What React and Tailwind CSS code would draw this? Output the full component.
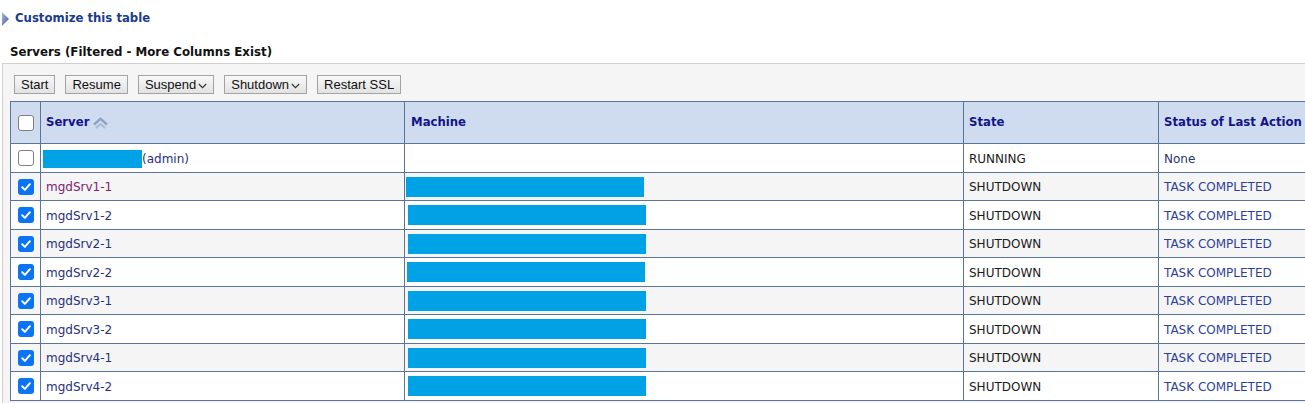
import React from "react";

const rows = [
  { name: null, state: "RUNNING", status: "None", checked: false, visited: false },
  { name: "mgdSrv1-1", state: "SHUTDOWN", status: "TASK COMPLETED", checked: true, visited: true, mx: "ml-[1px] w-[238px]" },
  { name: "mgdSrv1-2", state: "SHUTDOWN", status: "TASK COMPLETED", checked: true, mx: "ml-[3px] w-[238px]" },
  { name: "mgdSrv2-1", state: "SHUTDOWN", status: "TASK COMPLETED", checked: true, mx: "ml-[3px] w-[238px]" },
  { name: "mgdSrv2-2", state: "SHUTDOWN", status: "TASK COMPLETED", checked: true, mx: "ml-[2px] w-[238px]" },
  { name: "mgdSrv3-1", state: "SHUTDOWN", status: "TASK COMPLETED", checked: true, mx: "ml-[3px] w-[238px]" },
  { name: "mgdSrv3-2", state: "SHUTDOWN", status: "TASK COMPLETED", checked: true, mx: "ml-[3px] w-[238px]" },
  { name: "mgdSrv4-1", state: "SHUTDOWN", status: "TASK COMPLETED", checked: true, mx: "ml-[3px] w-[238px]" },
  { name: "mgdSrv4-2", state: "SHUTDOWN", status: "TASK COMPLETED", checked: true, mx: "ml-[3px] w-[238px]" },
];

function Box({ checked }) {
  if (checked) {
    return (
      <div className="w-[16px] h-[16px] rounded-[3px] bg-[#0a74f5] flex items-center justify-center">
        <svg width="12" height="12" viewBox="0 0 12 12">
          <path d="M2.2 6.3 L4.9 8.9 L9.9 3.2" fill="none" stroke="#fff" strokeWidth="2" strokeLinecap="round" strokeLinejoin="round" />
        </svg>
      </div>
    );
  }
  return <div className="w-[16px] h-[16px] rounded-[3px] border-[1.5px] border-[#808080] bg-white" />;
}

function Chevron() {
  return (
    <svg width="9" height="6" viewBox="0 0 9 6" className="ml-[2px] mt-[2px]">
      <path d="M0.8 1 L4.5 4.6 L8.2 1" fill="none" stroke="#333" strokeWidth="1.2" />
    </svg>
  );
}

function Btn({ children, dd }) {
  return (
    <div className="h-[19px] px-[6px] flex items-center border border-[#a3a3a3] bg-gradient-to-b from-[#f8f8f8] to-[#e2e2e2] text-[13px] text-[#111] leading-none font-['Liberation_Sans',Arial,sans-serif]">
      <span>{children}</span>
      {dd && <Chevron />}
    </div>
  );
}

export default function App() {
  const cell = "border-r border-b border-[#5b7599] flex items-center";
  return (
    <div className="w-[1305px] h-[403px] overflow-hidden bg-white font-['DejaVu_Sans',Verdana,sans-serif] text-[12px]">
      <div className="h-[37px] flex items-center pl-[2px] pt-[0px]">
        <svg width="7" height="14" viewBox="0 0 7 14" className="mr-[6px]">
          <defs>
            <linearGradient id="tri" x1="0" y1="0" x2="1" y2="1">
              <stop offset="0" stopColor="#a9bde0" />
              <stop offset="1" stopColor="#3d5c9c" />
            </linearGradient>
          </defs>
          <path d="M0 0 L7 7 L0 14 Z" fill="url(#tri)" />
        </svg>
        <span className="font-bold text-[#1b3c8e] text-[11.7px]">Customize this table</span>
      </div>
      <div className="h-[26px] pl-[10px] pt-[7px] font-bold text-[#111] text-[11.8px]">
        Servers (Filtered - More Columns Exist)
      </div>
      <div className="ml-[2px] border-l border-t border-[#cfcfcf] bg-[#f5f5f5] pl-[7px]">
        <div className="h-[37px] flex items-start pt-[11px] pl-[4px] gap-[10px] relative">
          <Btn>Start</Btn>
          <Btn>Resume</Btn>
          <Btn dd>Suspend</Btn>
          <Btn dd>Shutdown</Btn>
          <Btn>Restart SSL</Btn>
          <span className="absolute left-[1299px] top-[14px] text-[#b06010] font-bold">S</span>
        </div>
        <div className="w-[1400px] border-l border-t border-[#5b7599]">
          <div className="grid grid-cols-[30px_364px_559px_195px_252px] h-[42px] bg-[#cfdcef] font-bold text-[#14148a] text-[11.7px]">
            <div className={`${cell} justify-center pl-[0px]`}><Box checked={false} /></div>
            <div className={`${cell} pl-[5px] pt-[1px]`}>
              <span>Server</span>
              <svg width="17" height="13" viewBox="0 0 17 13" className="ml-[3px]">
                <path d="M2 7.5 L8.5 1.8 L15 7.5" fill="none" stroke="#8ea2c2" strokeWidth="2.4" />
                <path d="M4 11 L8.5 7 L13 11" fill="none" stroke="#a9b9d2" strokeWidth="2" />
              </svg>
            </div>
            <div className={`${cell} pl-[6px] pt-[1px]`}>Machine</div>
            <div className={`${cell} pl-[5px] pt-[1px]`}>State</div>
            <div className={`${cell} pl-[5px] pt-[1px]`}>Status of Last Action</div>
          </div>
          {rows.map((r, i) => (
            <div
              key={i}
              className={`grid grid-cols-[30px_364px_559px_195px_252px] ${i % 2 === 0 ? "h-[29px] bg-white" : "h-[28px] bg-[#f5f5f5]"}`}
            >
              <div className={`${cell} justify-center`}><Box checked={r.checked} /></div>
              <div className={`${cell} pl-[5px] pt-[1px]`}>
                {r.name ? (
                  <span className={r.visited ? "text-[#80206e]" : "text-[#26307a]"}>{r.name}</span>
                ) : (
                  <>
                    <div className="ml-[-3px] w-[99px] h-[18px] bg-[#00a2e6]" />
                    <span className="text-[#26307a]">(admin)</span>
                  </>
                )}
              </div>
              <div className={`${cell}`}>
                {r.mx && <div className={`${r.mx} h-[20px] bg-[#00a2e6]`} />}
              </div>
              <div className={`${cell} pl-[5px] pt-[1px] text-[#1a1a1a]`}>{r.state}</div>
              <div className={`${cell} pl-[5px] pt-[1px] ${r.status === "None" ? "text-[#2a3270]" : "text-[#2d3f9a]"}`}>{r.status}</div>
            </div>
          ))}
        </div>
        <div className="h-[10px]" />
      </div>
    </div>
  );
}
